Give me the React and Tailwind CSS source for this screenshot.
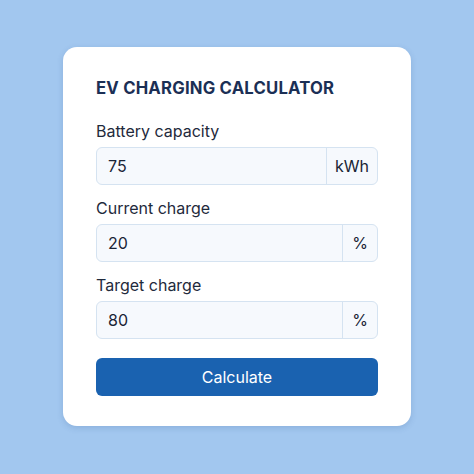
const fields = [
  { label: 'Battery capacity', value: '75', unit: 'kWh' },
  { label: 'Current charge', value: '20', unit: '%' },
  { label: 'Target charge', value: '80', unit: '%' },
];

function Field({ label, value, unit, first }) {
  return (
    <div className={first ? 'mt-[19px]' : 'mt-[11px]'}>
      <div className="text-[16px] leading-[24px] text-[#1f2a3c]">{label}</div>
      <div className="mt-[4px] flex h-[38px] rounded-[6px] border border-[#d5e3f1] bg-[#f6f9fd]">
        <div className="flex flex-1 items-center pl-[11px] text-[16px] text-[#1a2436]">{value}</div>
        <div className="flex min-w-[35px] items-center justify-center border-l border-[#d5e3f1] px-[8px] text-[16px] text-[#1a2436]">{unit}</div>
      </div>
    </div>
  );
}

export default function App() {
  return (
    <div className="flex h-[474px] w-[474px] items-start justify-center bg-[#a2c7ef] pt-[47px] font-['Inter',sans-serif]">
      <div className="w-[348px] rounded-[14px] bg-white px-[33px] pb-[30px] pt-[29px] shadow-[0_2px_6px_rgba(40,80,140,0.18)]">
        <h1 className="text-[16.7px] font-bold leading-[24px] tracking-[0.2px] text-[#1b2f55]">EV CHARGING CALCULATOR</h1>
        {fields.map((f, i) => (
          <Field key={f.label} {...f} first={i === 0} />
        ))}
        <button className="mt-[19px] flex h-[38px] w-full items-center justify-center rounded-[6px] bg-[#1a62b0] text-[16px] text-white">
          Calculate
        </button>
      </div>
    </div>
  );
}
